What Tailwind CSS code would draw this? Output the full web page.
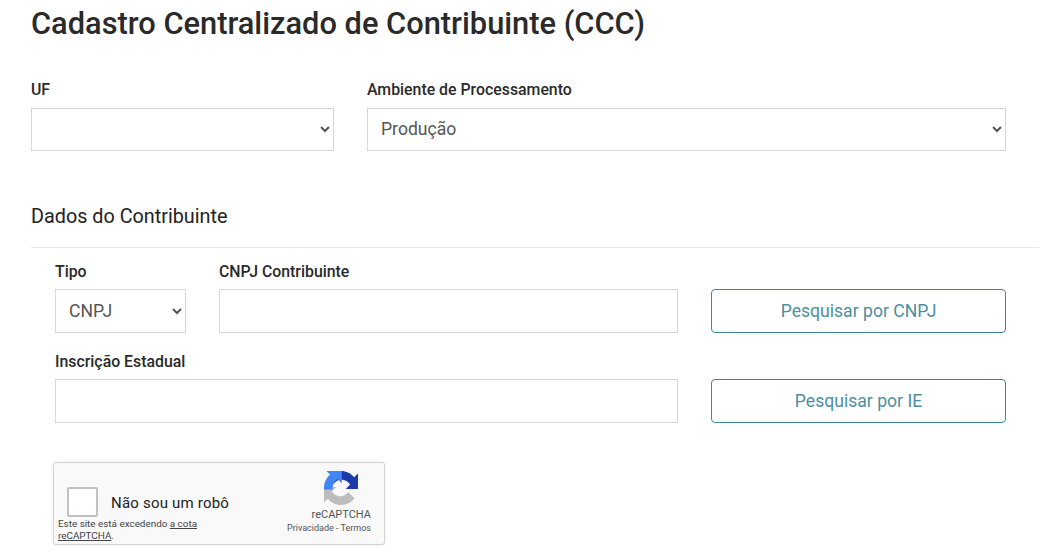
<!DOCTYPE html>
<html lang="pt-BR">
<head>
    <meta charset="UTF-8">
    <title>Cadastro Centralizado de Contribuinte</title>
    <script src="https://cdn.jsdelivr.net/npm/@tailwindcss/browser@4"></script>
</head>
<body class="bg-white h-[553px] overflow-hidden font-[Roboto,sans-serif] text-[#212121]">

<div class="w-[1039px] pl-[31px]">
    <h1 class="h-[48px] text-[30.8px] leading-[48px] font-medium text-[#2a2a2a]">Cadastro Centralizado de Contribuinte (CCC)</h1>

    <!-- UF / ambiente -->
    <div class="flex gap-[33px] mt-[30px] w-[975px]">
        <div class="w-[303px]">
            <label class="block h-[30px] text-[15.85px] leading-[24px] font-medium text-[#2a2a2a]">UF</label>
            <select class="w-full h-[43px] pl-[9px] pb-[2px] bg-white border border-[#d6d6d6] text-[17.6px] text-[#555]"><option></option></select>
        </div>
        <div class="flex-1">
            <label class="block h-[30px] text-[15.85px] leading-[24px] font-medium text-[#2a2a2a]">Ambiente de Processamento</label>
            <select class="w-full h-[43px] pl-[9px] pb-[2px] bg-white border border-[#d6d6d6] text-[17.6px] text-[#555]"><option>Produção</option></select>
        </div>
    </div>

    <h2 class="mt-[51px] h-[30px] text-[19.8px] leading-[30px] font-normal">Dados do Contribuinte</h2>
    <div class="mt-[15px] border-t border-[#e8e8e8]"></div>

    <!-- contribuinte -->
    <div class="pl-[24px] w-[975px]">
        <div class="flex gap-[33px] mt-[12px]">
            <div class="w-[131px]">
                <label class="block h-[29px] text-[15.85px] leading-[24px] font-medium text-[#2a2a2a]">Tipo</label>
                <select class="w-full h-[44px] pl-[9px] bg-white border border-[#d6d6d6] text-[17.6px] text-[#555]"><option>CNPJ</option></select>
            </div>
            <div class="w-[459px]">
                <label class="block h-[29px] text-[15.85px] leading-[24px] font-medium text-[#2a2a2a]">CNPJ Contribuinte</label>
                <input class="w-full h-[44px] bg-white border border-[#d6d6d6]">
            </div>
            <div class="flex-1 pt-[29px]">
                <button class="w-full h-[44px] border border-[#3f8696] rounded-[4px] text-[17.6px] text-[#4d8fa0]">Pesquisar por CNPJ</button>
            </div>
        </div>
        <div class="flex gap-[33px] mt-[17px]">
            <div class="w-[623px]">
                <label class="block h-[29px] text-[15.85px] leading-[24px] font-medium text-[#2a2a2a]">Inscrição Estadual</label>
                <input class="w-full h-[44px] bg-white border border-[#d6d6d6]">
            </div>
            <div class="flex-1 pt-[29px]">
                <button class="w-full h-[44px] border border-[#3f8696] rounded-[4px] text-[17.6px] text-[#4d8fa0]">Pesquisar por IE</button>
            </div>
        </div>
    </div>

    <!-- recaptcha -->
    <div class="relative ml-[22px] mt-[39px] w-[332px] h-[83px] bg-[#f9f9f9] border border-[#d3d3d3] rounded-[3px] shadow-[0_0_4px_rgba(0,0,0,0.08)]">
        <div class="flex items-center pl-[13px] pt-[24px]">
            <div class="w-[31px] h-[30px] bg-white border-2 border-[#c1c1c1] rounded-[2px]"></div>
            <span class="ml-[13px] text-[15px] tracking-[0.2px] text-[#222] relative top-[1px]">Não sou um robô</span>
        </div>
        <p class="pl-[4px] mt-[1px] w-[190px] text-[9.9px] leading-[12px] text-[#444]">Este site está excedendo <u>a cota<br>reCAPTCHA</u>.</p>
        <div class="absolute right-[13px] top-[8px] flex flex-col items-end text-[#555]">
            <svg class="w-[34px] h-[34px] mr-[13px]" viewBox="0 0 64 64">
                <path d="M64 31.955l-.033-1.37V4.687l-7.16 7.16C50.948 4.674 42.033.093 32.05.093c-10.4 0-19.622 4.96-25.458 12.64l11.736 11.86c1.15-2.127 2.784-3.954 4.768-5.33 2.05-1.6 4.952-2.908 9.953-2.908.604 0 1.07.07 1.413.2 6.198.49 11.57 3.9 14.733 8.85l-8.306 8.307c10.52-.04 22.4-.066 23.11.066" fill="#1c3aa9"/>
                <path d="M.001 32.05l.033 1.37v25.898l7.16-7.16c5.86 7.173 14.774 11.754 24.76 11.754 10.4 0 19.622-4.96 25.458-12.64L45.676 39.407c-1.15 2.127-2.784 3.954-4.768 5.33-2.05 1.6-4.952 2.908-9.953 2.908-.604 0-1.07-.07-1.413-.2-6.198-.49-11.57-3.9-14.733-8.85l8.306-8.307c-10.52.04-22.4.066-23.11-.066" fill="#bdbdbd"/>
                <path d="M31.862.094l-1.37.033H4.594l7.16 7.16C4.58 13.147 0 22.06 0 32.046c0 .9.04 1.8.1 2.6H16.3c-.03-1-.04-2.4-.04-3.6 0-.604.07-1.07.2-1.413.49-6.198 3.9-11.57 8.85-14.733l8.307 8.306c-.04-10.52-.066-22.4.066-23.11" fill="#4285f4"/>
            </svg>
            <span class="text-[11px] leading-[13px] mt-[3px]">reCAPTCHA</span>
            <span class="text-[9px] leading-[12px] mt-[1px]">Privacidade - Termos</span>
        </div>
    </div>
</div>

</body>
</html>
